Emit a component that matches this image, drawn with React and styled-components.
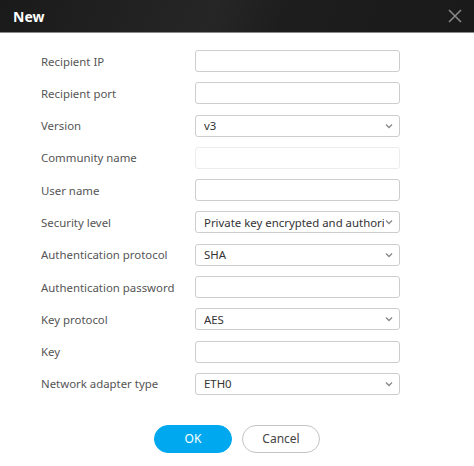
import React from 'react'
import styled, { createGlobalStyle } from 'styled-components'

const GlobalStyle = createGlobalStyle`
  html, body {
    margin: 0;
    padding: 0;
    background: #fff;
  }
  body {
    font-family: "Noto Sans", "Open Sans", Arial, sans-serif;
  }
`

const fields = [
  { label: 'Recipient IP', type: 'text' },
  { label: 'Recipient port', type: 'text' },
  { label: 'Version', type: 'select', value: 'v3' },
  { label: 'Community name', type: 'text', disabled: true },
  { label: 'User name', type: 'text' },
  { label: 'Security level', type: 'select', value: 'Private key encrypted and authorized' },
  { label: 'Authentication protocol', type: 'select', value: 'SHA' },
  { label: 'Authentication password', type: 'text' },
  { label: 'Key protocol', type: 'select', value: 'AES' },
  { label: 'Key', type: 'text' },
  { label: 'Network adapter type', type: 'select', value: 'ETH0' },
]

export default function App() {
  return (
    <Dialog>
      <GlobalStyle />
      <Header>
        <Title>New</Title>
        <CloseIcon />
      </Header>
      <Form>
        {fields.map(f => (
          <React.Fragment key={f.label}>
            <Label>{f.label}</Label>
            {f.type === 'select'
              ? <SelectBox value={f.value} />
              : <TextBox disabled={f.disabled} />}
          </React.Fragment>
        ))}
      </Form>
      <Buttons>
        <Button primary>OK</Button>
        <Button>Cancel</Button>
      </Buttons>
    </Dialog>
  )
}

function SelectBox({ value }) {
  return (
    <Field>
      <FieldText>{value}</FieldText>
      <Chevron viewBox="0 0 8 6">
        <path d="M1 1.5 L4 4.5 L7 1.5" fill="none" stroke="#8a8a8a" strokeWidth="1.4" />
      </Chevron>
    </Field>
  )
}

function TextBox({ disabled }) {
  return <Field disabled={disabled} />
}

function CloseIcon() {
  return (
    <CloseSvg viewBox="0 0 14 14">
      <path d="M1 1 L13 13 M13 1 L1 13" stroke="#8c8c8c" strokeWidth="1.5" />
    </CloseSvg>
  )
}

const Dialog = styled.div`
  width: 474px;
  height: 466px;
  background: #fff;
  overflow: hidden;
`

const Header = styled.div`
  height: 32px;
  display: flex;
  align-items: center;
  justify-content: space-between;
  padding: 0 12px 0 13px;
  background: linear-gradient(110deg, #1a1a1a 0%, #262626 45%, #1d1d1d 60%, #1a1a1a 100%);
  border-bottom: 1px solid #8a8a8a;
`

const Title = styled.div`
  color: #fff;
  font-size: 14px;
  font-weight: bold;
`

const CloseSvg = styled.svg`
  width: 14px;
  height: 14px;
`

const Form = styled.div`
  display: grid;
  grid-template-columns: 154px 205px;
  row-gap: 10.3px;
  align-items: center;
  padding: 17px 0 0 41px;
`

const Label = styled.div`
  font-size: 11.4px;
  color: #555;
  white-space: nowrap;
`

const Field = styled.div`
  height: 22px;
  box-sizing: border-box;
  border: 1px solid ${props => props.disabled ? '#ececec' : '#cdcdcd'};
  border-radius: 3px;
  background: #fff;
  display: flex;
  align-items: center;
  padding: 0 6px 0 8px;
  gap: 1px;
`

const FieldText = styled.span`
  flex: 1;
  font-size: 11.4px;
  color: #333;
  white-space: nowrap;
  overflow: hidden;
`

const Chevron = styled.svg`
  width: 8px;
  height: 6px;
  flex-shrink: 0;
`

const Buttons = styled.div`
  display: flex;
  justify-content: center;
  gap: 10px;
  padding: 30px 0 0 0;
`

const Button = styled.button`
  width: 78px;
  height: 28px;
  border-radius: 14px;
  font-family: inherit;
  font-size: 12px;
  cursor: pointer;
  border: 1px solid ${props => props.primary ? '#00a9ef' : '#c4c4c4'};
  background: ${props => props.primary ? '#00a9ef' : '#fff'};
  color: ${props => props.primary ? '#fff' : '#444'};
`
